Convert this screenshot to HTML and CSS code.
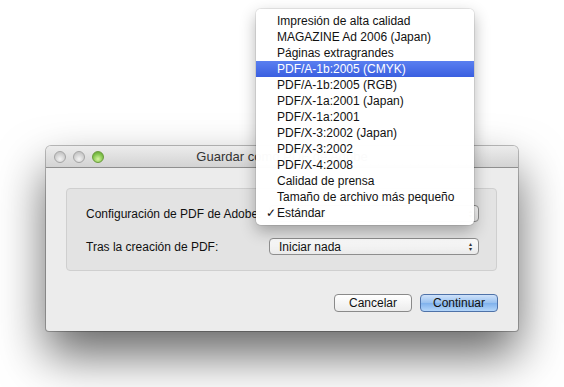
FILE: index.html
```html
<!DOCTYPE html>
<html lang="es">
<head>
    <meta charset="UTF-8">
    <title>Guardar como PDF de Adobe</title>
    <link rel="stylesheet" href="styles.css">
</head>
<body>
    <div class="stage">
        <div class="window">
            <div class="titlebar">
                <div class="lights">
                    <span class="light"></span>
                    <span class="light"></span>
                    <span class="light green"></span>
                </div>
                <div class="title">Guardar como PDF de Adobe</div>
            </div>
            <div class="content">
                <div class="group">
                    <div class="row">
                        <span class="label">Configuración de PDF de Adobe:</span>
                        <div class="popup"><span>Estándar</span><span class="arrows">&#9652;<br>&#9662;</span></div>
                    </div>
                    <div class="row">
                        <span class="label">Tras la creación de PDF:</span>
                        <div class="popup"><span>Iniciar nada</span><span class="arrows">&#9652;<br>&#9662;</span></div>
                    </div>
                </div>
                <div class="buttons">
                    <button class="btn">Cancelar</button>
                    <button class="btn default">Continuar</button>
                </div>
            </div>
        </div>
    </div>

    <ul class="menu">
        <li>Impresión de alta calidad</li>
        <li>MAGAZINE Ad 2006 (Japan)</li>
        <li>Páginas extragrandes</li>
        <li class="selected">PDF/A-1b:2005 (CMYK)</li>
        <li>PDF/A-1b:2005 (RGB)</li>
        <li>PDF/X-1a:2001 (Japan)</li>
        <li>PDF/X-1a:2001</li>
        <li>PDF/X-3:2002 (Japan)</li>
        <li>PDF/X-3:2002</li>
        <li>PDF/X-4:2008</li>
        <li>Calidad de prensa</li>
        <li>Tamaño de archivo más pequeño</li>
        <li class="checked">Estándar</li>
    </ul>
</body>
</html>
```

FILE: styles.css
```css
html, body {
    margin: 0;
    background: #fff;
    font-family: "Liberation Sans", Arial, sans-serif;
    font-size: 12px;
    color: #111;
}
body {
    min-height: 387px;
}
.stage {
    padding: 146px 0 0 46px;
}
.window {
    width: 472px;
    height: 185px;
    background: #ececec;
    border-radius: 5px 5px 3px 3px;
    box-shadow: 0 0 0 1px rgba(0,0,0,0.25), 0 24px 48px rgba(0,0,0,0.6);
    overflow: hidden;
}
.titlebar {
    height: 22px;
    display: flex;
    align-items: center;
    position: relative;
    background: linear-gradient(#ececec, #d3d3d3);
    border-bottom: 1px solid #8f8f8f;
    box-sizing: border-box;
}
.lights {
    display: flex;
    gap: 7px;
    padding-left: 8px;
}
.light {
    width: 12px;
    height: 12px;
    border-radius: 50%;
    box-sizing: border-box;
    border: 1px solid #a4a4a4;
    background: radial-gradient(circle at 50% 70%, #f4f4f4, #c8c8c8 70%);
}
.light.green {
    border-color: #6b9a3e;
    background: radial-gradient(circle at 50% 70%, #d6f5a0, #7fc24a 60%, #5e9a2c);
}
.title {
    position: absolute;
    left: 0;
    right: 0;
    text-align: center;
    font-size: 13px;
    color: #333;
    pointer-events: none;
}
.content {
    padding: 20px 21px 0 20px;
}
.group {
    height: 83px;
    box-sizing: border-box;
    border: 1px solid #cfcfcf;
    border-radius: 4px;
    background: #e3e3e3;
    padding: 16px 17px 0 19px;
    display: flex;
    flex-direction: column;
    gap: 16px;
}
.row {
    display: flex;
    align-items: center;
    justify-content: space-between;
    height: 17px;
    white-space: nowrap;
}
.popup {
    width: 210px;
    height: 17px;
    box-sizing: border-box;
    border: 1px solid #8e8e8e;
    border-radius: 4px;
    background: linear-gradient(#fdfdfd, #eaeaea);
    display: flex;
    align-items: center;
    justify-content: space-between;
    padding: 0 6px 0 9px;
    font-size: 12px;
}
.arrows {
    font-size: 6px;
    line-height: 5px;
    color: #333;
}
.buttons {
    display: flex;
    justify-content: flex-end;
    gap: 8px;
    margin-top: 23px;
    margin-right: -1px;
}
.btn {
    width: 78px;
    height: 18px;
    padding: 0;
    font-family: inherit;
    font-size: 12px;
    color: #111;
    border: 1px solid #8a8a8a;
    border-radius: 4px;
    background: linear-gradient(#ffffff, #ececec);
}
.btn.default {
    border-color: #4f72a8;
    background: linear-gradient(#cfe2fa, #97c0ef 50%, #7fb1ec 51%, #b4d6fa);
}
.menu {
    position: absolute;
    left: 256px;
    top: 9px;
    width: 218px;
    margin: 0;
    padding: 4px 0;
    list-style: none;
    background: rgba(255,255,255,0.98);
    border-radius: 5px;
    box-shadow: 0 0 0 1px rgba(0,0,0,0.08), 0 6px 16px rgba(0,0,0,0.3);
    white-space: nowrap;
}
.menu li {
    height: 16px;
    line-height: 16px;
    padding-left: 21px;
    position: relative;
}
.menu li.selected {
    color: #fff;
    background: linear-gradient(#5a7ff0, #3a5fe0);
}
.menu li.checked::before {
    content: "\2713";
    position: absolute;
    left: 10px;
}
```
